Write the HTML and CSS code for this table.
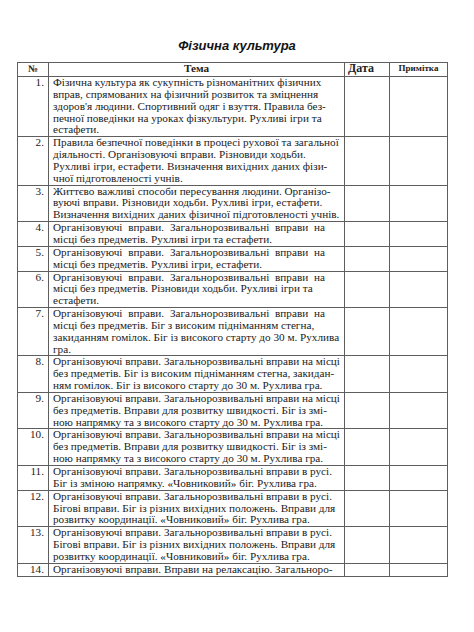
FILE: index.html
```html
<!DOCTYPE html>
<html lang="uk">
<head>
<meta charset="utf-8">
<title>Фізична культура</title>
<link rel="stylesheet" href="styles.css">
</head>
<body>
<div class="page">
  <h1 class="title">Фізична культура</h1>
  <table class="plan">
    <colgroup>
      <col class="c-num">
      <col class="c-topic">
      <col class="c-date">
      <col class="c-note">
    </colgroup>
    <thead>
      <tr>
        <th class="h-num">№</th>
        <th class="h-topic">Тема</th>
        <th class="h-date">Дата</th>
        <th class="h-note">Примітка</th>
      </tr>
    </thead>
    <tbody>
      <tr><td class="num">1.</td><td class="topic">Фізична культура як сукупність різноманітних фізичних<br>вправ, спрямованих на фізичний розвиток та зміцнення<br>здоров'я людини. Спортивний одяг і взуття. Правила без-<br>печної поведінки на уроках фізкультури. Рухливі ігри та<br>естафети.</td><td></td><td></td></tr>
      <tr><td class="num">2.</td><td class="topic">Правила безпечної поведінки в процесі рухової та загальної<br>діяльності. Організовуючі вправи. Різновиди ходьби.<br>Рухливі ігри, естафети. Визначення вихідних даних фізи-<br>чної підготовленості учнів.</td><td></td><td></td></tr>
      <tr><td class="num">3.</td><td class="topic">Життєво важливі способи пересування людини. Організо-<br>вуючі вправи. Різновиди ходьби. Рухливі ігри, естафети.<br>Визначення вихідних даних фізичної підготовленості учнів.</td><td></td><td></td></tr>
      <tr><td class="num">4.</td><td class="topic"><span class="wide">Організовуючі вправи. Загальнорозвивальні вправи на</span><br>місці без предметів. Рухливі ігри та естафети.</td><td></td><td></td></tr>
      <tr><td class="num">5.</td><td class="topic"><span class="wide">Організовуючі вправи. Загальнорозвивальні вправи на</span><br>місці без предметів. Рухливі ігри, естафети.</td><td></td><td></td></tr>
      <tr><td class="num">6.</td><td class="topic"><span class="wide">Організовуючі вправи. Загальнорозвивальні вправи на</span><br>місці без предметів. Різновиди ходьби. Рухливі ігри та<br>естафети.</td><td></td><td></td></tr>
      <tr><td class="num">7.</td><td class="topic"><span class="wide">Організовуючі вправи. Загальнорозвивальні вправи на</span><br>місці без предметів. Біг з високим підніманням стегна,<br>закиданням гомілок. Біг із високого старту до 30 м. Рухлива<br>гра.</td><td></td><td></td></tr>
      <tr><td class="num">8.</td><td class="topic">Організовуючі вправи. Загальнорозвивальні вправи на місці<br>без предметів. Біг із високим підніманням стегна, закидан-<br>ням гомілок. Біг із високого старту до 30 м. Рухлива гра.</td><td></td><td></td></tr>
      <tr><td class="num">9.</td><td class="topic">Організовуючі вправи. Загальнорозвивальні вправи на місці<br>без предметів. Вправи для розвитку швидкості. Біг із змі-<br>ною напрямку та з високого старту до 30 м. Рухлива гра.</td><td></td><td></td></tr>
      <tr><td class="num">10.</td><td class="topic">Організовуючі вправи. Загальнорозвивальні вправи на місці<br>без предметів. Вправи для розвитку швидкості. Біг із змі-<br>ною напрямку та з високого старту до 30 м. Рухлива гра.</td><td></td><td></td></tr>
      <tr><td class="num">11.</td><td class="topic">Організовуючі вправи. Загальнорозвивальні вправи в русі.<br>Біг із зміною напрямку. «Човниковий» біг. Рухлива гра.</td><td></td><td></td></tr>
      <tr><td class="num">12.</td><td class="topic">Організовуючі вправи. Загальнорозвивальні вправи в русі.<br>Бігові вправи. Біг із різних вихідних положень. Вправи для<br>розвитку координації. «Човниковий» біг. Рухлива гра.</td><td></td><td></td></tr>
      <tr><td class="num">13.</td><td class="topic">Організовуючі вправи. Загальнорозвивальні вправи в русі.<br>Бігові вправи. Біг із різних вихідних положень. Вправи для<br>розвитку координації. «Човниковий» біг. Рухлива гра.</td><td></td><td></td></tr>
      <tr><td class="num">14.</td><td class="topic">Організовуючі вправи. Вправи на релаксацію. Загальноро-</td><td></td><td></td></tr>
    </tbody>
  </table>
</div>
</body>
</html>
```

FILE: styles.css
```css
html, body {
  margin: 0;
  padding: 0;
  background: #ffffff;
}

.page {
  padding: 38px 0 0 17px;
  font-family: "Liberation Serif", "Times New Roman", serif;
  color: #222222;
}

.title {
  margin: 0 0 8px -17px;
  width: 474px;
  text-align: center;
  font-family: "Liberation Sans", Arial, sans-serif;
  font-size: 13px;
  line-height: 16px;
  font-weight: bold;
  font-style: italic;
  color: #141414;
}

.plan {
  border-collapse: collapse;
  table-layout: fixed;
  width: 430px;
  border: 1.5px solid #505050;
  font-size: 11.2px;
  line-height: 11.85px;
}

.c-num { width: 31px; }
.c-topic { width: 296px; }
.c-date { width: 45px; }
.c-note { width: 58px; }

.plan th,
.plan td {
  border: 1px solid #5e5e5e;
  padding: 0;
  vertical-align: top;
}

.plan th {
  font-weight: bold;
  height: 13px;
}

.h-num {
  text-align: center;
  font-size: 10px;
}

.h-topic {
  text-align: center;
  font-size: 11.2px;
}

.plan th.h-date {
  text-align: left;
  padding-left: 3px;
  font-size: 12px;
}

.h-note {
  text-align: center;
  font-size: 9px;
  line-height: 10px;
}

.plan td.num {
  text-align: right;
  padding-right: 4px;
}

.plan td.topic {
  padding-left: 4px;
  white-space: nowrap;
}

.wide {
  word-spacing: 3px;
}
```
